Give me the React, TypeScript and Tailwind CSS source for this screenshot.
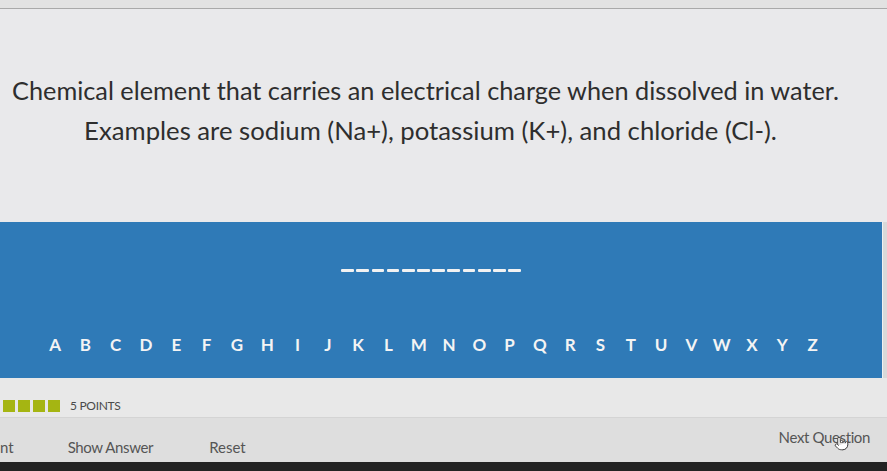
import { Pointer } from "lucide-react";

const letters = "ABCDEFGHIJKLMNOPQRSTUVWXYZ".split("");
const dashes = Array.from({ length: 12 }, (_, i) => i);
const squares = [0, 1, 2, 3];

export default function App() {
  return (
    <div
      className="w-[887px] h-[471px] overflow-hidden flex flex-col bg-[#e4e4e6]"
      style={{ fontFamily: "Lato, 'Open Sans', sans-serif" }}
    >
      {/* top edge */}
      <div className="h-[9px] shrink-0 bg-[#e2e2e2] border-b border-[#a9a9a9]" />

      {/* question card */}
      <div className="h-[213px] shrink-0 bg-[#e9e9eb] flex flex-col items-center pt-[61px]">
        <p className="text-[25.3px] leading-[40px] text-[#2e2e2e] text-center whitespace-nowrap pr-[36px]">
          Chemical element that carries an electrical charge when dissolved in water.
        </p>
        <p className="text-[25.7px] leading-[40px] text-[#2e2e2e] text-center whitespace-nowrap pr-[26px]">
          Examples are sodium (Na+), potassium (K+), and chloride (Cl-).
        </p>
      </div>

      {/* answer board */}
      <div className="h-[156px] shrink-0 flex">
        <div className="w-[882px] bg-[#2f7ab7] flex flex-col">
          <div className="flex justify-center gap-[2.5px] pt-[47px] pr-[20px]">
            {dashes.map((d) => (
              <div key={d} className="w-[12.7px] h-[3px] bg-[#f2f2f2] rounded-[1px]" />
            ))}
          </div>
          <div className="flex pl-[40px] pt-[63px]">
            {letters.map((l) => (
              <span
                key={l}
                className="w-[30.3px] text-center text-[17px] font-bold leading-5 text-[#f4f4f4]"
              >
                {l}
              </span>
            ))}
          </div>
        </div>
        <div className="flex-1 bg-[#d9d9d9] border-l border-[#f0f0f0]" />
      </div>

      {/* points */}
      <div className="h-[40px] shrink-0 bg-[#e8e8e8] flex items-center gap-[3px] pl-[3px] pt-[16px] border-b border-[#d4d4d4]">
        {squares.map((s) => (
          <div key={s} className="w-[12px] h-[12px] bg-[#a5b512]" />
        ))}
        <span className="ml-[7px] text-[12px] text-[#4a4a4a] tracking-tight">5 POINTS</span>
      </div>

      {/* action bar */}
      <div className="h-[44px] shrink-0 bg-[#dedede] flex items-start text-[15px] text-[#555]">
        <span className="mt-[18px]">nt</span>
        <span className="ml-[54px] mt-[18px] tracking-tight">Show Answer</span>
        <span className="ml-[56px] mt-[18px]">Reset</span>
        <span className="ml-auto mr-[17px] mt-[8px] relative tracking-tight">
          Next Question
          <Pointer className="absolute left-[55px] top-[10px] w-[15px] h-[15px] text-[#444] fill-white" strokeWidth={1.6} />
        </span>
      </div>

      {/* screen bezel */}
      <div className="flex-1 bg-[#232323]" />
    </div>
  );
}
